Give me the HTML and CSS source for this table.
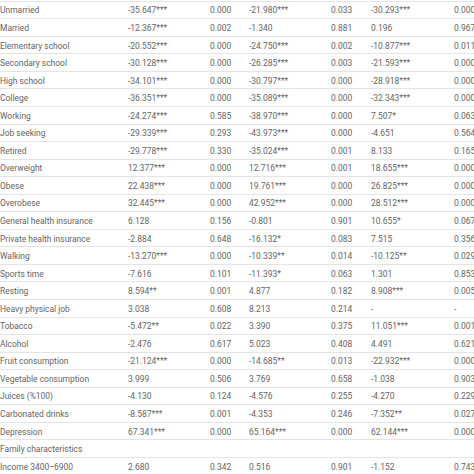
FILE: index.html
```html
<!DOCTYPE html>
<html>
<head>
<meta charset="utf-8">
<link rel="stylesheet" href="styles.css">
</head>
<body>
<div class="table">
  <div class="row"><span>Unmarried</span><span>-35.647***</span><span>0.000</span><span>-21.980***</span><span>0.033</span><span>-30.293***</span><span>0.000</span></div>
  <div class="row"><span>Married</span><span>-12.367***</span><span>0.002</span><span>-1.340</span><span>0.881</span><span>0.196</span><span>0.967</span></div>
  <div class="row"><span>Elementary school</span><span>-20.552***</span><span>0.000</span><span>-24.750***</span><span>0.002</span><span>-10.877***</span><span>0.011</span></div>
  <div class="row"><span>Secondary school</span><span>-30.128***</span><span>0.000</span><span>-26.285***</span><span>0.003</span><span>-21.593***</span><span>0.000</span></div>
  <div class="row"><span>High school</span><span>-34.101***</span><span>0.000</span><span>-30.797***</span><span>0.000</span><span>-28.918***</span><span>0.000</span></div>
  <div class="row"><span>College</span><span>-36.351***</span><span>0.000</span><span>-35.089***</span><span>0.000</span><span>-32.343***</span><span>0.000</span></div>
  <div class="row"><span>Working</span><span>-24.274***</span><span>0.585</span><span>-38.970***</span><span>0.000</span><span>7.507*</span><span>0.063</span></div>
  <div class="row"><span>Job seeking</span><span>-29.339***</span><span>0.293</span><span>-43.973***</span><span>0.000</span><span>-4.651</span><span>0.564</span></div>
  <div class="row"><span>Retired</span><span>-29.778***</span><span>0.330</span><span>-35.024***</span><span>0.001</span><span>8.133</span><span>0.165</span></div>
  <div class="row"><span>Overweight</span><span>12.377***</span><span>0.000</span><span>12.716***</span><span>0.001</span><span>18.655***</span><span>0.000</span></div>
  <div class="row"><span>Obese</span><span>22.438***</span><span>0.000</span><span>19.761***</span><span>0.000</span><span>26.825***</span><span>0.000</span></div>
  <div class="row"><span>Overobese</span><span>32.445***</span><span>0.000</span><span>42.952***</span><span>0.000</span><span>28.512***</span><span>0.000</span></div>
  <div class="row"><span>General health insurance</span><span>6.128</span><span>0.156</span><span>-0.801</span><span>0.901</span><span>10.655*</span><span>0.067</span></div>
  <div class="row"><span>Private health insurance</span><span>-2.884</span><span>0.648</span><span>-16.132*</span><span>0.083</span><span>7.515</span><span>0.356</span></div>
  <div class="row"><span>Walking</span><span>-13.270***</span><span>0.000</span><span>-10.339**</span><span>0.014</span><span>-10.125**</span><span>0.029</span></div>
  <div class="row"><span>Sports time</span><span>-7.616</span><span>0.101</span><span>-11.393*</span><span>0.063</span><span>1.301</span><span>0.853</span></div>
  <div class="row"><span>Resting</span><span>8.594**</span><span>0.001</span><span>4.877</span><span>0.182</span><span>8.908***</span><span>0.005</span></div>
  <div class="row"><span>Heavy physical job</span><span>3.038</span><span>0.608</span><span>8.213</span><span>0.214</span><span>-</span><span>-</span></div>
  <div class="row"><span>Tobacco</span><span>-5.472**</span><span>0.022</span><span>3.390</span><span>0.375</span><span>11.051***</span><span>0.001</span></div>
  <div class="row"><span>Alcohol</span><span>-2.476</span><span>0.617</span><span>5.023</span><span>0.408</span><span>4.491</span><span>0.621</span></div>
  <div class="row"><span>Fruit consumption</span><span>-21.124***</span><span>0.000</span><span>-14.685**</span><span>0.013</span><span>-22.932***</span><span>0.000</span></div>
  <div class="row"><span>Vegetable consumption</span><span>3.999</span><span>0.506</span><span>3.769</span><span>0.658</span><span>-1.038</span><span>0.903</span></div>
  <div class="row"><span>Juices (%100)</span><span>-4.130</span><span>0.124</span><span>-4.576</span><span>0.255</span><span>-4.270</span><span>0.229</span></div>
  <div class="row"><span>Carbonated drinks</span><span>-8.587***</span><span>0.001</span><span>-4.353</span><span>0.246</span><span>-7.352**</span><span>0.027</span></div>
  <div class="row"><span>Depression</span><span>67.341***</span><span>0.000</span><span>65.164***</span><span>0.000</span><span>62.144***</span><span>0.000</span></div>
  <div class="row"><span>Family characteristics</span><span></span><span></span><span></span><span></span><span></span><span></span></div>
  <div class="row"><span>Income 3400−6900</span><span>2.680</span><span>0.342</span><span>0.516</span><span>0.901</span><span>-1.152</span><span>0.743</span></div>
</div>
</body>
</html>
```
FILE: styles.css
```css
html, body {
  margin: 0;
  padding: 0;
  background: #ffffff;
  overflow: hidden;
}
.table {
  width: 540px;
  padding-top: 0.7px;
  font-family: Roboto, "Liberation Sans", sans-serif;
  font-size: 9.5px;
  color: #646464;
}
.row {
  display: grid;
  grid-template-columns: 128px 82px 39px 82px 40px 83px 86px;
  height: 17.55px;
  box-sizing: border-box;
  border-top: 1px solid #e4e4e4;
  align-items: center;
  white-space: nowrap;
}
.row span {
  display: block;
  transform: scaleX(0.89);
  transform-origin: left center;
}
```
